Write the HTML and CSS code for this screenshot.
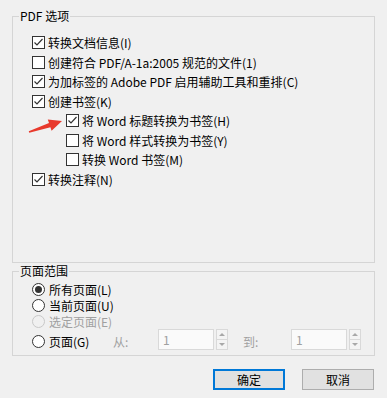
FILE: index.html
```html
<!DOCTYPE html>
<html lang="zh-CN">
<head>
  <meta charset="UTF-8" />
  <title>PDF 选项</title>
  <link rel="stylesheet" href="styles.css">
</head>
<body>
  <fieldset class="group pdf-options">
    <legend>PDF 选项</legend>
    <ul class="opts">
      <li class="opt"><span class="box"><svg viewBox="0 0 11 11"><path d="M1.5 5.5 L4 8 L9.5 2"/></svg></span>转换文档信息(I)</li>
      <li class="opt"><span class="box"></span>创建符合 PDF/A-1a:2005 规范的文件(1)</li>
      <li class="opt"><span class="box"><svg viewBox="0 0 11 11"><path d="M1.5 5.5 L4 8 L9.5 2"/></svg></span>为加标签的 Adobe PDF 启用辅助工具和重排(C)</li>
      <li class="opt"><span class="box"><svg viewBox="0 0 11 11"><path d="M1.5 5.5 L4 8 L9.5 2"/></svg></span>创建书签(K)</li>
      <li class="opt sub"><span class="box"><svg viewBox="0 0 11 11"><path d="M1.5 5.5 L4 8 L9.5 2"/></svg></span>将 Word 标题转换为书签(H)</li>
      <li class="opt sub"><span class="box"></span>将 Word 样式转换为书签(Y)</li>
      <li class="opt sub"><span class="box"></span>转换 Word 书签(M)</li>
      <li class="opt"><span class="box"><svg viewBox="0 0 11 11"><path d="M1.5 5.5 L4 8 L9.5 2"/></svg></span>转换注释(N)</li>
    </ul>
  </fieldset>

  <fieldset class="group range">
    <legend>页面范围</legend>
    <ul class="opts">
      <li class="radio-row"><span class="radio on"></span>所有页面(L)</li>
      <li class="radio-row"><span class="radio"></span>当前页面(U)</li>
      <li class="radio-row disabled"><span class="radio"></span>选定页面(E)</li>
      <li class="page-row">
        <span class="page-label"><span class="radio"></span>页面(G)</span>
        <span class="muted from">从:</span>
        <span class="num">1</span>
        <span class="spin"><i class="up"></i><i class="down"></i></span>
        <span class="muted to">到:</span>
        <span class="num">1</span>
        <span class="spin"><i class="up"></i><i class="down"></i></span>
      </li>
    </ul>
  </fieldset>

  <div class="actions">
    <button class="btn default">确定</button>
    <button class="btn">取消</button>
  </div>

  <!-- annotation arrow drawn over the dialog -->
  <svg class="arrow" width="40" height="22" viewBox="0 0 40 22">
    <polygon points="2.75,17.24 23,9 21.8,5.4 36,7 25.6,16.8 24.4,13.2 3.25,18.76" />
  </svg>
</body>
</html>
```

FILE: styles.css
```css
body {
  margin: 0;
  width: 387px;
  height: 398px;
  overflow: hidden;
  position: relative;
  background: #f0f0f0;
  color: #000;
  font: 12px "Noto Sans CJK SC", "Microsoft YaHei", sans-serif;
}
.group {
  margin: 8px 12px 0;
  padding: 9px 6px 73px;
  border: 1px solid #d5d5d5;
  min-inline-size: 0;
}
.group legend {
  padding: 0 1px;
  line-height: 16px;
}
.range {
  margin-top: 0;
  padding: 2px 6px 5px;
}
.opts {
  list-style: none;
  margin: 0;
  padding: 0 0 0 13px;
}
.opt {
  display: flex;
  align-items: center;
  height: 19.5px;
  white-space: nowrap;
}
.opt.sub { padding-left: 34px; }
.box {
  flex: none;
  width: 13px;
  height: 13px;
  box-sizing: border-box;
  border: 1px solid #333;
  background: #fff;
  margin-right: 3px;
  display: flex;
}
.box svg {
  width: 11px;
  height: 11px;
  fill: none;
  stroke: #333;
  stroke-width: 1.2;
}

.radio-row {
  display: flex;
  align-items: center;
  height: 16px;
}
.radio {
  flex: none;
  position: relative;
  width: 13px;
  height: 13px;
  box-sizing: border-box;
  border: 1px solid #333;
  border-radius: 50%;
  background: #fff;
  margin-right: 4px;
}
.radio.on::after {
  content: "";
  position: absolute;
  left: 2px;
  top: 2px;
  width: 7px;
  height: 7px;
  border-radius: 50%;
  background: #333;
}
.disabled { color: #a0a0a0; }
.disabled .radio { border-color: #c8c8c8; background: #f0f0f0; }

.page-row {
  display: flex;
  align-items: center;
  height: 21px;
}
.page-label {
  display: flex;
  align-items: center;
  width: 81px;
  padding-top: 3px;
}
.muted { color: #a0a0a0; }
.from { width: 45px; padding-top: 3px; }
.to { width: 48px; margin-left: 15px; padding-top: 3px; }
.num {
  box-sizing: border-box;
  width: 56px;
  height: 21px;
  line-height: 19px;
  padding-left: 4px;
  border: 1px solid #d9d9d9;
  background: #fafafa;
  color: #a0a0a0;
}
.spin {
  box-sizing: border-box;
  display: flex;
  flex-direction: column;
  width: 12px;
  height: 21px;
  margin-left: 2px;
  border: 1px solid #d9d9d9;
  background: #f4f4f4;
}
.spin i {
  flex: 1;
  position: relative;
}
.spin .up { border-bottom: 1px solid #d9d9d9; }
.spin i::after {
  content: "";
  position: absolute;
  left: 2px;
  top: 3px;
  border-left: 3px solid transparent;
  border-right: 3px solid transparent;
}
.spin .up::after { border-bottom: 3px solid #a8a8a8; }
.spin .down::after { border-top: 3px solid #a8a8a8; top: 3px; }

.actions {
  display: flex;
  justify-content: flex-end;
  gap: 17px;
  margin-top: 13px;
  padding-right: 13px;
}
.btn {
  box-sizing: border-box;
  width: 72px;
  height: 21px;
  padding: 0;
  border: 1px solid #adadad;
  background: #e1e1e1;
  font: inherit;
  color: #000;
}
.btn.default { border: 2px solid #0078d7; }

.arrow {
  position: absolute;
  left: 26px;
  top: 114px;
  fill: #e8392c;
}
```
